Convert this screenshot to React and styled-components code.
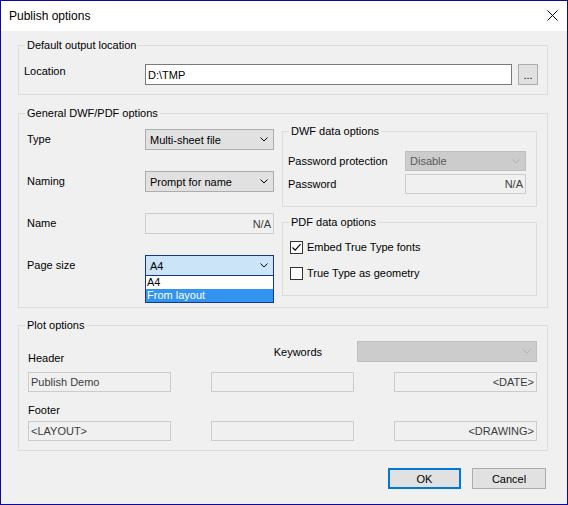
import React from 'react';
import styled, { createGlobalStyle } from 'styled-components';

const GlobalStyle = createGlobalStyle`
  html, body {
    margin: 0;
    padding: 0;
    background: #f0f0f0;
  }
  body {
    font-family: "Liberation Sans", Arial, sans-serif;
    font-size: 11px;
    color: #000;
  }
  * {
    box-sizing: border-box;
  }
`;

// Window frame
const Window = styled.div`
  width: 568px;
  height: 505px;
  border: 1px solid #0a0a9e;
  background: #f0f0f0;
  display: flex;
  flex-direction: column;
`;

const TitleBar = styled.div`
  height: 30px;
  flex-shrink: 0;
  background: #fff;
  display: flex;
  align-items: center;
  justify-content: space-between;
  padding: 0 9px 1px 8px;
  font-size: 12px;
`;

const Body = styled.div`
  flex: 1;
  display: flex;
  flex-direction: column;
  padding: 7px 19px 0 17px;
`;

// Group boxes
const Group = styled.fieldset`
  margin: ${(p) => p.$gap || 0}px 0 0;
  padding: 0;
  border: 1px solid #dcdcdc;
  min-inline-size: 0;
`;

const Caption = styled.legend`
  margin-left: 6px;
  padding: 0 2px;
  line-height: 14px;
`;

const Label = styled.span`
  line-height: 13px;
  white-space: nowrap;
  flex-shrink: 0;
  width: ${(p) => (p.$w ? `${p.$w}px` : 'auto')};
`;

// Edits, combos, buttons
const Edit = styled.div`
  height: ${(p) => p.$h || 20}px;
  flex: ${(p) => (p.$grow ? 1 : 'none')};
  width: ${(p) => (p.$w ? `${p.$w}px` : 'auto')};
  display: flex;
  align-items: center;
  justify-content: ${(p) => (p.$right ? 'flex-end' : 'flex-start')};
  padding: 0 2px 0 2px;
  background: ${(p) => (p.$active ? '#fff' : '#f0f0f0')};
  border: 1px solid ${(p) => (p.$active ? '#7a7a7a' : '#cccccc')};
  color: ${(p) => (p.$active ? '#000' : '#3c3c3c')};
  white-space: nowrap;
`;

const comboColors = {
  normal: { bg: '#e1e1e1', border: '#adadad', text: '#000', arrow: '#000' },
  focus: { bg: '#cce4f7', border: '#15368f', text: '#000', arrow: '#000' },
  disabled: { bg: '#cccccc', border: '#bfbfbf', text: '#5a5a5a', arrow: '#b0b0b0' },
};

const ComboBox = styled.div`
  position: relative;
  height: ${(p) => p.$h || 21}px;
  width: ${(p) => p.$w}px;
  flex-shrink: 0;
  display: flex;
  align-items: center;
  justify-content: space-between;
  padding: 0 5px 0 4px;
  background: ${(p) => comboColors[p.$kind].bg};
  border: 1px solid ${(p) => comboColors[p.$kind].border};
  color: ${(p) => comboColors[p.$kind].text};
  white-space: nowrap;
`;

const DropList = styled.div`
  position: absolute;
  top: calc(100% + 0px);
  left: -1px;
  right: -1px;
  z-index: 2;
  border: 1px solid #15368f;
  background: #fff;
`;

const DropItem = styled.div`
  height: 13px;
  line-height: 13px;
  padding-left: 1px;
  background: ${(p) => (p.$selected ? '#3393f0' : '#fff')};
  color: ${(p) => (p.$selected ? '#fff' : '#000')};
`;

const Button = styled.button`
  width: ${(p) => p.$w}px;
  height: 21px;
  margin: 0;
  padding: 0;
  font-family: inherit;
  font-size: 11px;
  color: #000;
  background: #e1e1e1;
  border: ${(p) => (p.$default ? '2px solid #0078d7' : '1px solid #adadad')};
`;

const Chevron = ({ color }) => (
  <svg width="8" height="5" viewBox="0 0 8 5">
    <polyline points="0.5,0.5 4,4 7.5,0.5" fill="none" stroke={color} strokeWidth="1" />
  </svg>
);

const Combo = ({ kind = 'normal', w, h, children, list }) => (
  <ComboBox $kind={kind} $w={w} $h={h}>
    <span>{children}</span>
    <Chevron color={comboColors[kind].arrow} />
    {list}
  </ComboBox>
);

// Group 1
const LocationRow = styled.div`
  display: flex;
  align-items: center;
  padding: 12px 9px 9px 5px;
`;

const LocationLabel = styled(Label)`
  align-self: flex-start;
  margin-top: 1px;
`;

const BrowseButton = styled(Button)`
  margin-left: 6px;
  flex-shrink: 0;
  line-height: 12px;
`;

// Group 2
const GeneralGrid = styled.div`
  display: grid;
  grid-template-columns: 247px 255px;
  column-gap: 8px;
  align-items: start;
  padding: 4px 10px 11px 8px;
`;

const LeftColumn = styled.div`
  display: flex;
  flex-direction: column;
  gap: 21px;
  padding-top: 5px;
`;

const FieldRow = styled.div`
  display: flex;
  align-items: center;
`;

const RightColumn = styled.div`
  display: flex;
  flex-direction: column;
`;

const DwfBody = styled.div`
  display: flex;
  flex-direction: column;
  gap: 3px;
  padding: 13px 10px 12px 5px;
`;

const PdfBody = styled.div`
  display: flex;
  flex-direction: column;
  gap: 13px;
  padding: 12px 10px 15px 7px;
`;

const CheckRow = styled.label`
  display: flex;
  align-items: center;
  gap: 4px;
  height: 13px;
  line-height: 13px;
`;

const CheckBox = styled.span`
  width: 13px;
  height: 13px;
  flex-shrink: 0;
  border: 1px solid #333;
  background: #fff;
  display: flex;
  align-items: center;
  justify-content: center;
`;

// Group 3
const PlotBody = styled.div`
  display: flex;
  flex-direction: column;
  padding: 9px 10px 9px 9px;
`;

const PlotTop = styled.div`
  display: flex;
  align-items: flex-start;
  justify-content: space-between;
`;

const HeaderLabel = styled(Label)`
  padding-top: 11px;
`;

const KeywordsGroup = styled.div`
  display: flex;
  align-items: flex-start;
  gap: 35px;
`;

const KeywordsLabel = styled(Label)`
  padding-top: 5px;
`;

const FieldsGrid = styled.div`
  display: grid;
  grid-template-columns: repeat(3, 143px);
  column-gap: 40px;
  margin-top: ${(p) => p.$top}px;
`;

const FooterLabel = styled(Label)`
  margin-top: 12px;
`;

const ButtonBar = styled.div`
  display: flex;
  justify-content: flex-end;
  gap: 11px;
  margin-top: 17px;
  padding-right: 2px;
`;

const CloseIcon = () => (
  <svg width="11" height="11" viewBox="0 0 11 11">
    <path d="M0.5 0.5 L10.5 10.5 M10.5 0.5 L0.5 10.5" stroke="#000" strokeWidth="1" fill="none" />
  </svg>
);

const CheckMark = () => (
  <svg width="11" height="11" viewBox="0 0 11 11">
    <path d="M1.5 5.5 L4.2 8.2 L9.5 2.2" stroke="#000" strokeWidth="1.2" fill="none" />
  </svg>
);

const App = () => (
  <>
    <GlobalStyle />
    <Window>
      <TitleBar>
        <span>Publish options</span>
        <CloseIcon />
      </TitleBar>

      <Body>
        <Group>
          <Caption>Default output location</Caption>
          <LocationRow>
            <LocationLabel $w={121}>Location</LocationLabel>
            <Edit $active $grow $h={21}>D:\TMP</Edit>
            <BrowseButton $w={20}>...</BrowseButton>
          </LocationRow>
        </Group>

        <Group $gap={11}>
          <Caption>General DWF/PDF options</Caption>
          <GeneralGrid>
            <LeftColumn>
              <FieldRow>
                <Label $w={118}>Type</Label>
                <Combo w={129}>Multi-sheet file</Combo>
              </FieldRow>
              <FieldRow>
                <Label $w={118}>Naming</Label>
                <Combo w={129}>Prompt for name</Combo>
              </FieldRow>
              <FieldRow>
                <Label $w={118}>Name</Label>
                <Edit $w={129} $h={21} $right>N/A</Edit>
              </FieldRow>
              <FieldRow>
                <Label $w={118}>Page size</Label>
                <Combo
                  kind="focus"
                  w={129}
                  list={
                    <DropList>
                      <DropItem>A4</DropItem>
                      <DropItem $selected>From layout</DropItem>
                    </DropList>
                  }
                >
                  A4
                </Combo>
              </FieldRow>
            </LeftColumn>

            <RightColumn>
              <Group>
                <Caption>DWF data options</Caption>
                <DwfBody>
                  <FieldRow>
                    <Label $w={117}>Password protection</Label>
                    <Combo kind="disabled" w={121} h={20}>Disable</Combo>
                  </FieldRow>
                  <FieldRow>
                    <Label $w={117}>Password</Label>
                    <Edit $w={121} $right>N/A</Edit>
                  </FieldRow>
                </DwfBody>
              </Group>

              <Group $gap={8}>
                <Caption>PDF data options</Caption>
                <PdfBody>
                  <CheckRow>
                    <CheckBox><CheckMark /></CheckBox>
                    Embed True Type fonts
                  </CheckRow>
                  <CheckRow>
                    <CheckBox />
                    True Type as geometry
                  </CheckRow>
                </PdfBody>
              </Group>
            </RightColumn>
          </GeneralGrid>
        </Group>

        <Group $gap={10}>
          <Caption>Plot options</Caption>
          <PlotBody>
            <PlotTop>
              <HeaderLabel>Header</HeaderLabel>
              <KeywordsGroup>
                <KeywordsLabel>Keywords</KeywordsLabel>
                <Combo kind="disabled" w={180} h={21} />
              </KeywordsGroup>
            </PlotTop>
            <FieldsGrid $top={7}>
              <Edit>Publish Demo</Edit>
              <Edit />
              <Edit $right>&lt;DATE&gt;</Edit>
            </FieldsGrid>
            <FooterLabel>Footer</FooterLabel>
            <FieldsGrid $top={4}>
              <Edit>&lt;LAYOUT&gt;</Edit>
              <Edit />
              <Edit $right>&lt;DRAWING&gt;</Edit>
            </FieldsGrid>
          </PlotBody>
        </Group>

        <ButtonBar>
          <Button $w={73} $default>OK</Button>
          <Button $w={74}>Cancel</Button>
        </ButtonBar>
      </Body>
    </Window>
  </>
);

export default App;
